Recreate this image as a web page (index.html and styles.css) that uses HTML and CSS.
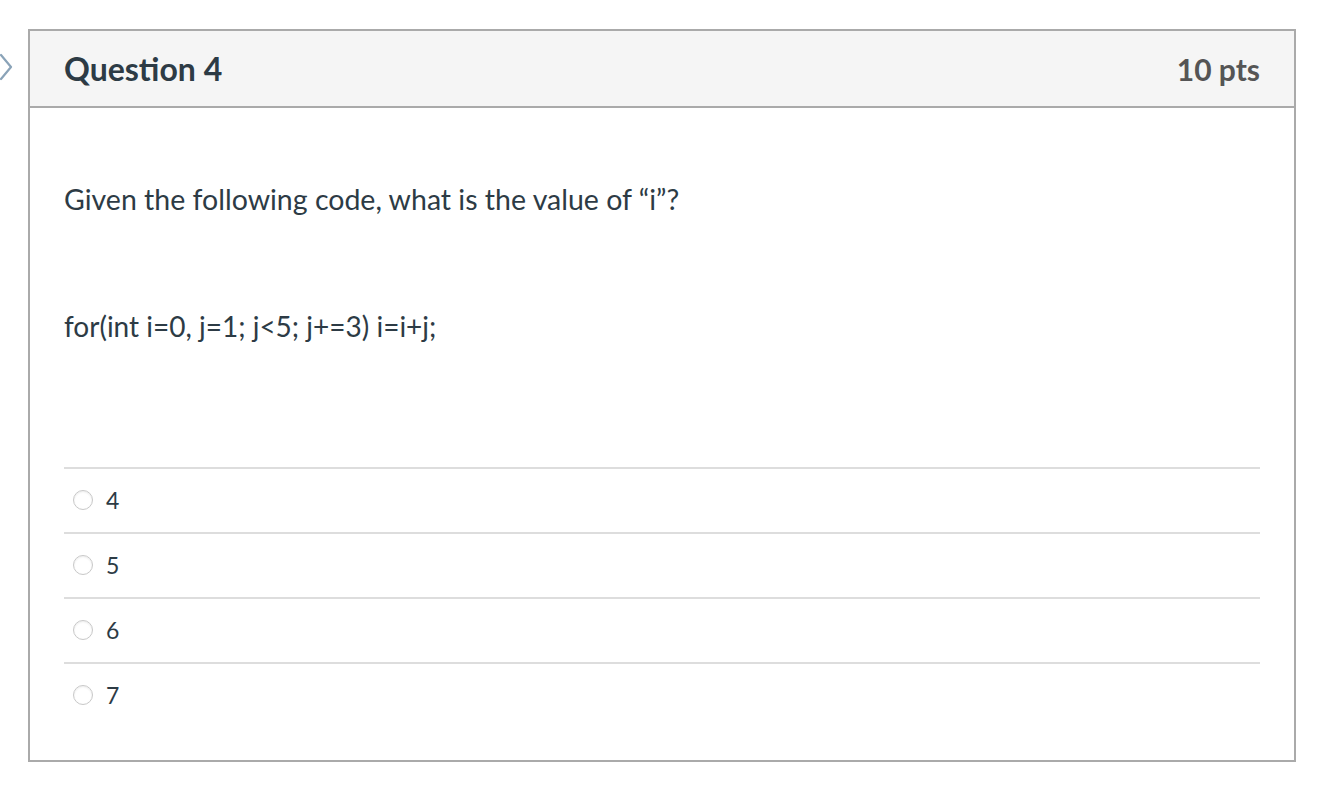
FILE: index.html
```html
<!DOCTYPE html>
<html>
<head>
<meta charset="utf-8">
<link rel="stylesheet" href="styles.css">
</head>
<body>
<div class="page">
  <div class="chev">
    <svg width="14" height="28" viewBox="0 0 14 28"><path d="M1 2 L11 14 L1 26" fill="none" stroke="#8aa3b8" stroke-width="2.2" stroke-linejoin="round" stroke-linecap="round"/></svg>
  </div>
  <div class="card">
    <div class="header">
      <span class="title">Question 4</span>
      <span class="pts">10 pts</span>
    </div>
    <div class="body">
      <p class="q q1">Given the following code, what is the value of “i”?</p>
      <p class="q q2">for(int i=0, j=1; j&lt;5; j+=3) i=i+j;</p>
      <div class="answers">
        <div class="answer"><span class="radio"></span><span class="label">4</span></div>
        <div class="answer"><span class="radio"></span><span class="label">5</span></div>
        <div class="answer"><span class="radio"></span><span class="label">6</span></div>
        <div class="answer"><span class="radio"></span><span class="label">7</span></div>
      </div>
    </div>
  </div>
</div>
</body>
</html>
```
FILE: styles.css
```css
* { box-sizing: border-box; }
html, body { margin: 0; padding: 0; background: #fff; }
body { font-family: Lato, "Open Sans", sans-serif; color: #2d3b45; }
.page { position: relative; padding: 29px 0 0 28px; width: 1322px; height: 790px; }
.chev { position: absolute; left: 0; top: 53px; }
.card { width: 1268px; height: 733px; border: 2px solid #aaaaaa; }
.header {
  height: 77px; background: #f5f5f5; border-bottom: 2px solid #aaaaaa;
  display: flex; justify-content: space-between; align-items: center;
  padding: 0 34px 0 34px;
}
.title { font-size: 32px; font-weight: 700; color: #2d3b45; }
.pts { font-size: 30px; font-weight: 700; color: #555555; }
.body { padding: 73px 34px 0 34px; }
.q { margin: 0; font-size: 28.5px; line-height: 36px; color: #2d3b45; }
.q2 { margin-top: 91px; font-size: 28px; }
.answers { margin-top: 123px; }
.answer {
  height: 65px; border-top: 2px solid #dddddd;
  display: flex; align-items: center; padding: 0 0 1px 9px;
}
.radio {
  width: 20px; height: 20px; border-radius: 50%;
  border: 1px solid #c8c8c8; background: #fff;
  box-shadow: inset 0 1px 2px rgba(0,0,0,0.08);
}
.label { margin-left: 13px; font-size: 23px; color: #2d3b45; }
```
